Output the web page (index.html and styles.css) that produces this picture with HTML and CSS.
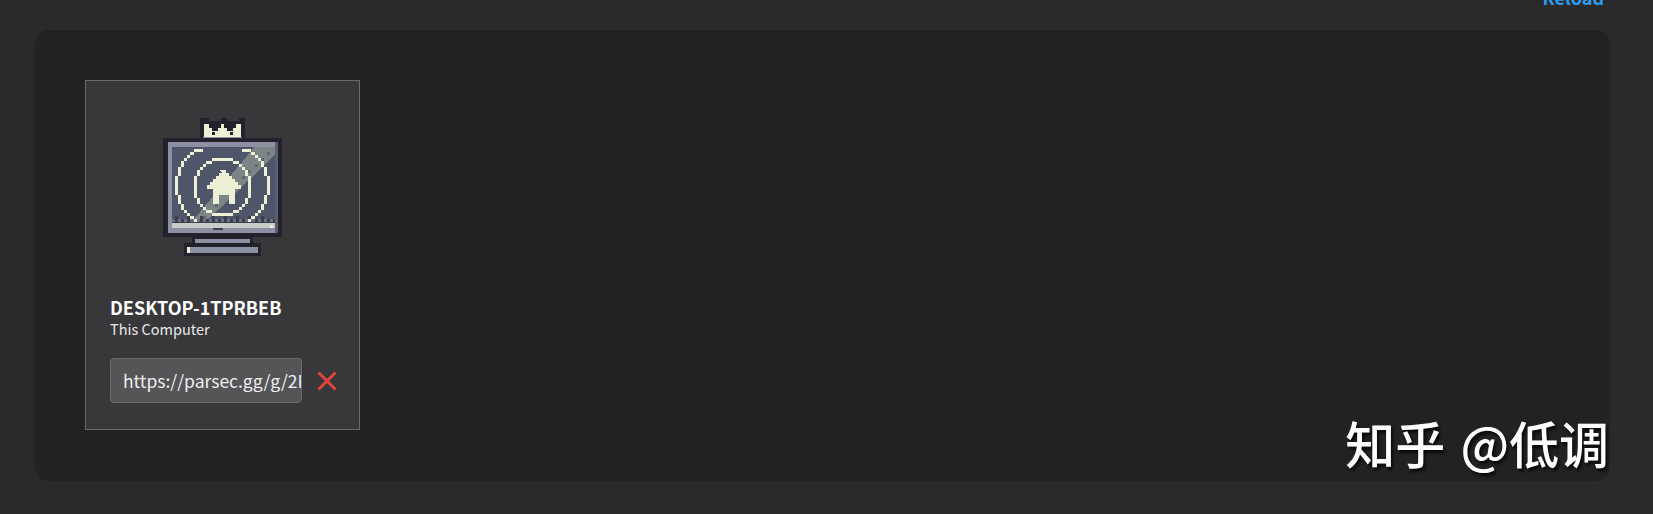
FILE: index.html
```html
<!DOCTYPE html>
<html lang="en">
<head>
    <meta charset="UTF-8">
    <meta name="viewport" content="width=device-width, initial-scale=1.0">
    <title>Computers</title>
    <link rel="stylesheet" href="styles.css">
</head>
<body>
    <div class="top-bar">
        <a class="reload" href="#">Reload</a>
    </div>
    <div class="panel">
        <div class="card">
            <div class="card-icon">
                <svg class="pc-icon" viewBox="0 0 39 45" width="119" height="138" shape-rendering="crispEdges">
                    <defs>
                        <path id="ring-outer" d="M10 10h3v1h-3zM9 11h1v1H9zM8 12h1v1H8zM7 13h1v1H7zM6 14h1v2H6zM5 16h1v3H5zM4 19h1v6H4zM5 25h1v3H5zM6 28h1v2H6zM7 30h1v1H7zM8 31h1v1H8zM9 32h1v1H9zM10 33h1v1h-1z"/>
                        <path id="ring-inner" d="M16 13h4v1h-4zM14 14h2v1h-2zM13 15h1v1h-1zM12 16h1v1h-1zM11 17h1v2h-1zM10 19h1v7h-1zM11 26h1v2h-1zM12 28h1v1h-1zM13 29h1v1h-1zM14 30h2v1h-2zM16 31h4v1h-4z"/>
                    </defs>
                    <!-- crown -->
                    <path fill="#23222c" d="M12 0h3v1h4V0h2v1h4V0h2v7H12z"/>
                    <path fill="#eef0d6" d="M13.5 2h1.5v1h1v1h2V3h1V2h1v1h1v1h2V3h1V2h1.5v4h-12z"/>
                    <path fill="#23222c" d="M16 4.6h1v.8h-1zM22 4.6h1v.8h-1z"/>
                    <rect x="13" y="6" width="13" height="1" fill="#8d8fa3"/>
                    <!-- stand -->
                    <rect x="9.5" y="38" width="20" height="4" fill="#23222c"/>
                    <rect x="7" y="41" width="25" height="4" fill="#23222c"/>
                    <rect x="10.5" y="39.6" width="18" height="1.4" fill="#8d8fa3"/>
                    <rect x="8" y="42" width="23" height="2" fill="#8d8fa3"/>
                    <rect x="8" y="42" width="1" height="2" fill="#eef0d6"/>
                    <!-- monitor -->
                    <rect x="0" y="6.6" width="39" height="32.4" fill="#23222c"/>
                    <rect x="1.5" y="7.8" width="36.3" height="29.9" fill="#8d8fa3"/>
                    <rect x="36.7" y="7.8" width="1.1" height="29.9" fill="#5d5f70"/>
                    <rect x="2.8" y="9.4" width="33.9" height="25" fill="#4f566a"/>
                    <path fill="#7c8486" d="M30 9.4h6.7v2.6L13.5 34.4H9z"/>
                    <path fill="#5f6675" d="M34 11h1v1h-1zM32 13h1v1h-1zM30 15h1v1h-1zM28 17h1v1h-1zM26 19h1v1h-1zM17 28h1v1h-1zM15 30h1v1h-1zM13 32h1v1h-1z"/>
                    <rect x="2.8" y="33" width="33.9" height="1.4" fill="#3b3e4c"/>
                    <path fill="#6a7080" d="M3 33h1v1H3zM5 33h1v1H5zM7 33h1v1H7zM9 33h1v1H9zM11 33h1v1h-1zM13 33h1v1h-1zM15 33h1v1h-1zM17 33h1v1h-1zM19 33h1v1h-1zM21 33h1v1h-1zM23 33h1v1h-1zM25 33h1v1h-1zM27 33h1v1h-1zM29 33h1v1h-1zM31 33h1v1h-1zM33 33h1v1h-1zM35 33h1v1h-1z"/>
                    <path fill="#3b3e4c" d="M4 32h1v1H4zM8 32h1v1H8zM12 32h1v1h-1zM16 32h1v1h-1zM20 32h1v1h-1zM24 32h1v1h-1zM28 32h1v1h-1zM32 32h1v1h-1z"/>
                    <rect x="2.8" y="34.4" width="33.9" height="1.4" fill="#c9ccc6"/>
                    <rect x="35" y="35" width="1" height="1" fill="#eef0d6"/>
                    <rect x="16.5" y="36" width="3" height="0.7" fill="#3b3e4c"/>
                    <!-- rings and house -->
                    <g fill="#eef0d6">
                        <use href="#ring-outer"/>
                        <use href="#ring-outer" transform="matrix(-1 0 0 1 39 0)"/>
                        <use href="#ring-inner"/>
                        <use href="#ring-inner" transform="matrix(-1 0 0 1 39 0)"/>
                        <path d="M18.5 17h2v1h1v1h1v1h1v1h1v1h1v1h-2v5h-2v-3h-3v3h-2v-5h-2v-1h1v-1h1v-1h1v-1h1v-1h1z"/>
                    </g>
                </svg>
            </div>
            <div class="card-name">DESKTOP-1TPRBEB</div>
            <div class="card-sub">This Computer</div>
            <div class="link-row">
                <input class="link-input" type="text" value="https://parsec.gg/g/2Ptk8sQ" readonly>
                <svg class="close-icon" viewBox="0 0 20 20" width="20" height="20">
                    <path d="M1.5 1.5l17 17M18.5 1.5l-17 17" stroke="#e0443c" stroke-width="3" fill="none"/>
                </svg>
            </div>
        </div>
        <div class="watermark">知乎 @低调</div>
    </div>
</body>
</html>
```

FILE: styles.css
```css
html, body {
    height: 514px;
    overflow: hidden;
}
body {
    margin: 0;
    background-color: #2a2a2a;
    color: #fff;
    font-family: "Noto Sans CJK SC", "Noto Sans", sans-serif;
}
.top-bar {
    height: 30px;
    overflow: hidden;
    display: flex;
    justify-content: flex-end;
    padding-right: 49px;
}
.reload {
    margin-top: -16px;
    height: 26px;
    line-height: 26px;
    color: #2c9df0;
    font-size: 18px;
    font-weight: 700;
    text-decoration: none;
}
.panel {
    position: relative;
    box-sizing: border-box;
    width: 1575px;
    height: 451px;
    margin-left: 35px;
    padding: 50px;
    background-color: #212224;
    border-radius: 14px;
}
.card {
    box-sizing: border-box;
    width: 275px;
    height: 350px;
    padding: 0 24px;
    background-color: #38383a;
    border: 1px solid #6a6a6a;
}
.card-icon {
    display: flex;
    justify-content: center;
    padding-top: 37px;
    height: 154px;
    margin-bottom: 23px;
}
.pc-icon {
    display: block;
    height: 138px;
}
.card-name {
    font-size: 18px;
    font-weight: 700;
    line-height: 24px;
}
.card-sub {
    font-size: 14.5px;
    line-height: 20px;
    color: #e8e8e8;
}
.link-row {
    display: flex;
    align-items: center;
    gap: 15px;
    margin-top: 19px;
}
.link-input {
    box-sizing: border-box;
    width: 192px;
    height: 45px;
    padding: 0 0 0 12px;
    background-color: #555557;
    border: 1px solid #6a6a6a;
    border-radius: 4px;
    color: #eee;
    font-family: inherit;
    font-size: 17.5px;
    outline: none;
}
.close-icon {
    flex: none;
}
.watermark {
    position: absolute;
    right: 1px;
    bottom: 3px;
    font-size: 50px;
    line-height: 72px;
    font-weight: 500;
    word-spacing: 4px;
    white-space: nowrap;
    text-shadow: 2px 3px 3px rgba(0, 0, 0, 0.75);
}
```
